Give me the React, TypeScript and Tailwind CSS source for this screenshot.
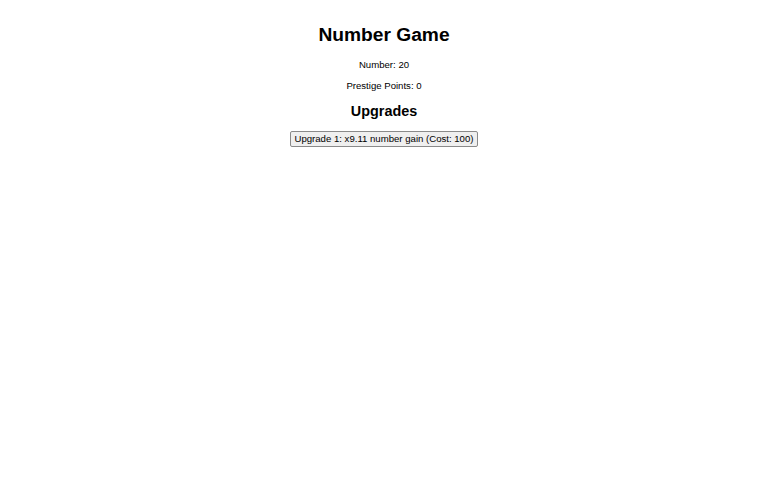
export default function App() {
  return (
    <div className="min-h-screen bg-white text-black" style={{ fontFamily: '"Liberation Sans", Arial, sans-serif' }}>
      <div className="flex flex-col items-center pt-[24px] text-[9.6px] leading-[11px]">
        <h1 className="m-0 text-[19.2px] font-bold leading-[22px]">Number Game</h1>
        <p className="mt-[13px]">Number: 20</p>
        <p className="mt-[10px]">Prestige Points: 0</p>
        <h2 className="mt-[12px] text-[14.4px] font-bold leading-[16.5px]">Upgrades</h2>
        <button
          type="button"
          className="mt-[11px] h-[16px] rounded-[2px] border border-[#8a8a8a] bg-[#efefef] px-[3px] text-[9.6px] leading-[11px] text-black"
        >
          Upgrade 1: x9.11 number gain (Cost: 100)
        </button>
      </div>
    </div>
  );
}
